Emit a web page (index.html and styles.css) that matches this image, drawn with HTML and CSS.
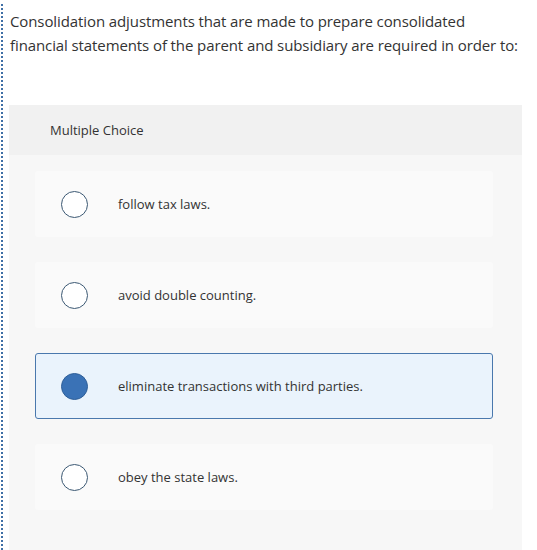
FILE: index.html
```html
<!DOCTYPE html>
<html>
<head>
<meta charset="utf-8">
<link rel="stylesheet" href="styles.css">
</head>
<body>
<div class="frame">
  <p class="question">Consolidation adjustments that are made to prepare consolidated<br>financial statements of the parent and subsidiary are required in order to:</p>
  <div class="panel">
    <div class="panel-head">Multiple Choice</div>
    <div class="options">
      <div class="option"><span class="radio"></span><span class="label">follow tax laws.</span></div>
      <div class="option"><span class="radio"></span><span class="label">avoid double counting.</span></div>
      <div class="option selected"><span class="radio"></span><span class="label">eliminate transactions with third parties.</span></div>
      <div class="option"><span class="radio"></span><span class="label">obey the state laws.</span></div>
    </div>
  </div>
</div>
</body>
</html>
```

FILE: styles.css
```css
html, body {
  margin: 0;
  padding: 0;
  background: #ffffff;
}
body {
  font-family: "Open Sans", "Liberation Sans", sans-serif;
  color: #333333;
  overflow: hidden;
  height: 550px;
}
.frame {
  margin-top: 4px;
  margin-left: 1px;
  border-left: 2px dotted #3f6fa6;
  padding: 5px 0 0 6px;
  height: 546px;
  box-sizing: border-box;
}
.question {
  margin: 0 0 0 1px;
  font-size: 15px;
  line-height: 24px;
  color: #333333;
  white-space: nowrap;
  letter-spacing: -0.1px;
}
.panel {
  margin-top: 48px;
  background: #f7f7f7;
  width: 513px;
  height: 445px;
}
.panel-head {
  height: 50px;
  background: #f1f1f1;
  display: flex;
  align-items: center;
  padding-left: 41px;
  font-size: 13px;
  color: #333333;
}
.options {
  display: flex;
  flex-direction: column;
  gap: 25px;
  padding: 16px 29px 0 26px;
}
.option {
  height: 66px;
  box-sizing: border-box;
  background: #fafafa;
  border-radius: 3px;
  display: flex;
  align-items: center;
  padding-left: 26px;
}
.radio {
  width: 27px;
  height: 27px;
  box-sizing: border-box;
  border-radius: 50%;
  border: 1.5px solid #3b5873;
  background: #ffffff;
  flex: none;
}
.label {
  margin-left: 30px;
  font-size: 13px;
  color: #333333;
}
.option.selected {
  background: #eaf3fc;
  border: 1px solid #4a78ad;
  padding-left: 25px;
}
.option.selected .radio {
  background: #3a72b6;
  border-color: #2f5f98;
}
```
